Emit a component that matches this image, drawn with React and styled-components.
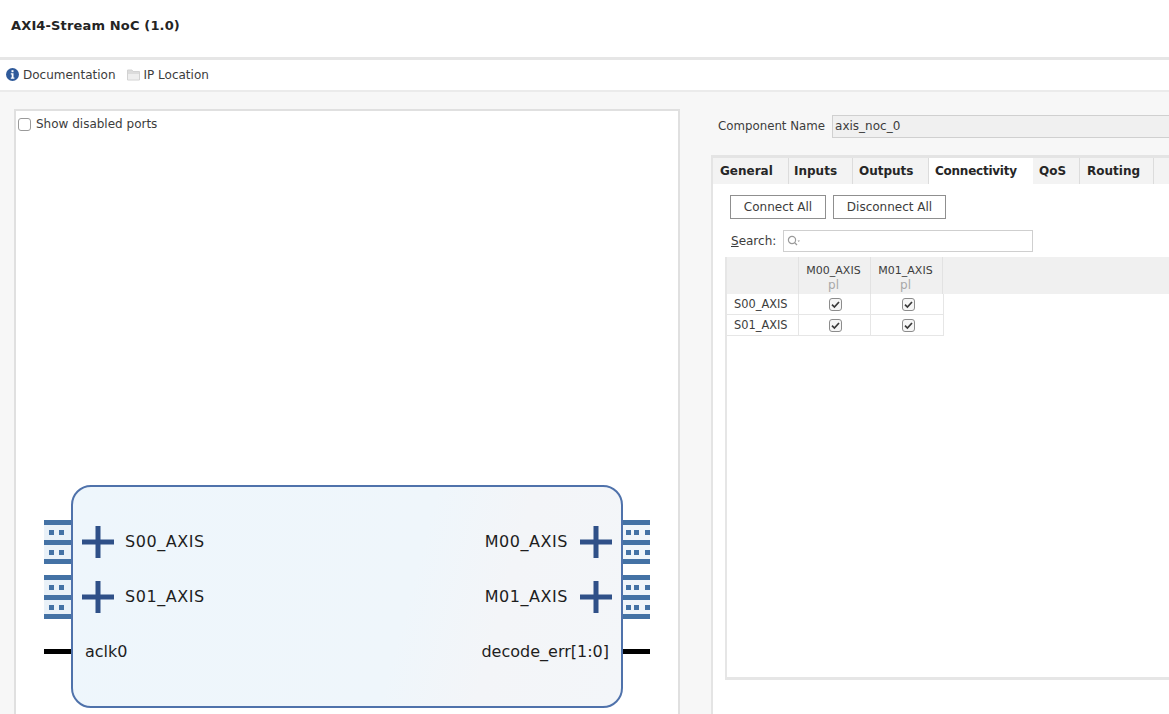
import React from "react";
import styled, { createGlobalStyle } from "styled-components";

const GlobalStyle = createGlobalStyle`
  html, body {
    margin: 0;
    padding: 0;
    background: #ffffff;
  }
  body {
    font-family: "DejaVu Sans", "Liberation Sans", sans-serif;
    color: #2e2e2e;
    font-size: 12px;
  }
`;

const Page = styled.div`
  width: 1169px;
  height: 714px;
  overflow: hidden;
  display: flex;
  flex-direction: column;
`;

const Header = styled.div`
  height: 50px;
  flex-shrink: 0;
  display: flex;
  align-items: center;
  padding: 0 0 7px 11px;
  border-bottom: 3px solid #e6e6e6;
`;

const Title = styled.div`
  font-weight: 700;
  font-size: 13px;
  letter-spacing: 0.15px;
  color: #242424;
`;

const LinkBar = styled.div`
  height: 29px;
  flex-shrink: 0;
  display: flex;
  align-items: center;
  padding: 0 0 1px 6px;
  border-bottom: 2px solid #ebebeb;
`;

const LinkItem = styled.div`
  display: flex;
  align-items: center;
  gap: 4px;
  margin-right: 11px;
  color: #3c3c3c;
`;

const Main = styled.div`
  flex: 1;
  display: flex;
  align-items: flex-start;
  background: #f7f7f7;
  padding: 17px 0 0 14px;
  min-height: 0;
`;

const CanvasPanel = styled.div`
  width: 662px;
  height: 640px;
  flex-shrink: 0;
  background: #ffffff;
  border: 2px solid #e0e0e0;
`;

const ShowPorts = styled.label`
  display: flex;
  align-items: center;
  gap: 5px;
  padding: 6px 0 0 2px;
  color: #3c3c3c;
`;

const EmptyBox = styled.span`
  width: 11px;
  height: 11px;
  border: 1px solid #9a9a9a;
  border-radius: 3px;
  background: #fff;
`;

const Diagram = styled.div`
  margin: 354px 0 0 28px;
  display: flex;
`;

const PortColumn = styled.div`
  width: 27px;
  padding-top: 29px;
  display: flex;
  flex-direction: column;
`;

const PortSlot = styled.div`
  height: 55px;
  display: flex;
  align-items: center;
`;

const WirePort = styled.div`
  width: 100%;
  height: 5px;
  background: #000000;
`;

const Block = styled.div`
  width: 548px;
  height: 192px;
  border: 2px solid #4f72ab;
  border-radius: 20px;
  background: linear-gradient(105deg, #eef6fc 0%, #eff6fb 60%, #f3f5f8 76%, #f3f6f9 100%);
  padding-top: 27px;
`;

const BlockRow = styled.div`
  height: 55px;
  display: flex;
  align-items: center;
  justify-content: space-between;
`;

const PinGroup = styled.div`
  display: flex;
  align-items: center;
  gap: ${({ $right }) => ($right ? "12px" : "11px")};
  padding: ${({ $right }) => ($right ? "0 9px 0 0" : "0 0 0 9px")};
`;

const PinName = styled.span`
  font-size: 16px;
  color: #1e1e1e;
  letter-spacing: ${({ $bus }) => ($bus ? "0.55px" : "0")};
  padding: ${({ $pad }) => $pad || "0"};
`;

const RightPane = styled.div`
  margin-left: 31px;
  width: 458px;
  flex-shrink: 0;
  display: flex;
  flex-direction: column;
`;

const NameRow = styled.div`
  display: flex;
  align-items: center;
  gap: 7px;
  padding-left: 7px;
  margin-top: 6px;
`;

const NameLabel = styled.span`
  font-size: 11.8px;
  padding-bottom: 2px;
  color: #3c3c3c;
`;

const NameField = styled.div`
  flex: 1;
  height: 21px;
  line-height: 21px;
  border: 1px solid #d0d0d0;
  border-right: none;
  background: #f0f0f0;
  padding-left: 2px;
  color: #3c3c3c;
`;

const TabFrame = styled.div`
  margin-top: 17px;
  border-top: 3px solid #e4e4e4;
  border-left: 2px solid #e4e4e4;
  background: #ffffff;
  height: 560px;
`;

const TabStrip = styled.div`
  height: 26px;
  display: flex;
  background: #f3f3f3;
`;

const Tab = styled.div`
  height: 26px;
  box-sizing: border-box;
  width: ${({ $w }) => $w}px;
  padding-left: ${({ $pad }) => $pad}px;
  line-height: 27px;
  font-weight: 700;
  font-size: 12px;
  letter-spacing: ${({ $track }) => $track || 0}px;
  color: #262626;
  background: ${({ $active }) => ($active ? "#ffffff" : "transparent")};
  border-right: ${({ $active }) => ($active ? "none" : "1px solid #dcdcdc")};
`;

const TabBody = styled.div`
  padding: 11px 0 0 12px;
  background: #ffffff;
`;

const ButtonRow = styled.div`
  display: flex;
  gap: 7px;
  padding-left: 5px;
`;

const Button = styled.button`
  width: ${({ $w }) => $w}px;
  height: 24px;
  padding: 0;
  font-family: inherit;
  font-size: 12px;
  color: #3c3c3c;
  background: #ffffff;
  border: 1px solid #8f8f8f;
`;

const SearchRow = styled.div`
  display: flex;
  align-items: center;
  margin-top: 11px;
  padding-left: 6px;
`;

const SearchLabel = styled.span`
  width: 52px;
  color: #3c3c3c;
`;

const SearchBox = styled.div`
  width: 250px;
  height: 22px;
  box-sizing: border-box;
  display: flex;
  align-items: center;
  padding-left: 3px;
  border: 1px solid #cfcfcf;
`;

const TablePanel = styled.div`
  margin-top: 5px;
  height: 420px;
  border-left: 2px solid #e6e6e6;
  border-bottom: 3px solid #e6e6e6;
`;

const HeadRow = styled.div`
  display: flex;
  height: 37px;
  background: #f0f0f0;
`;

const HeadCell = styled.div`
  width: 72px;
  height: 37px;
  box-sizing: border-box;
  border-right: 1px solid #e2e2e2;
  display: flex;
  flex-direction: column;
  align-items: center;
  padding: 7px 2px 0 0;
  font-size: 11px;
  line-height: 14px;
  color: #3c3c3c;
`;

const CornerCell = styled.div`
  width: 71px;
  border-right: 1px solid #e2e2e2;
`;

const SubLabel = styled.span`
  font-size: 12px;
  line-height: 15px;
  color: #a8a8a8;
`;

const BodyRow = styled.div`
  display: flex;
  width: 216px;
  height: 20px;
  border-bottom: 1px solid #e6e6e6;
  border-right: 1px solid #e6e6e6;
  box-sizing: content-box;
`;

const RowLabel = styled.div`
  width: 72px;
  border-right: 1px solid #e6e6e6;
  padding-left: 7px;
  box-sizing: border-box;
  font-size: 11.4px;
  line-height: 20px;
  color: #3c3c3c;
`;

const CheckCell = styled.div`
  width: 72px;
  box-sizing: border-box;
  padding-left: 2px;
  border-right: ${({ $last }) => ($last ? "none" : "1px solid #e6e6e6")};
  display: flex;
  align-items: center;
  justify-content: center;
`;

const CheckBox = () => (
  <svg width="13" height="13" viewBox="0 0 13 13">
    <rect x="0.5" y="0.5" width="12" height="12" rx="2.5" fill="#f6f6f6" stroke="#8c8c8c" />
    <path d="M3 6.6 L5.4 9 L10 4" fill="none" stroke="#3a3a3a" strokeWidth="1.7" />
  </svg>
);

const InfoIcon = () => (
  <svg width="13" height="13" viewBox="0 0 13 13">
    <circle cx="6.5" cy="6.5" r="6.5" fill="#2f5a9a" />
    <rect x="5.5" y="2.2" width="2" height="2" fill="#fff" />
    <path d="M4.8 5.3 H7.5 V9.6 H8.4 V10.7 H4.8 V9.6 H5.7 V6.4 H4.8 Z" fill="#fff" />
  </svg>
);

const FolderIcon = () => (
  <svg width="13" height="12" viewBox="0 0 13 12">
    <path d="M0.5 1 H5 L6 2.5 H12.5 V11 H0.5 Z" fill="#dcdcdc" stroke="#d2d2d2" />
    <rect x="1" y="5" width="11" height="5.5" fill="#eeeeee" />
  </svg>
);

const SearchIcon = () => (
  <svg width="14" height="12" viewBox="0 0 14 12">
    <circle cx="5" cy="5" r="3.6" fill="none" stroke="#9a9a9a" strokeWidth="1.2" />
    <path d="M7.6 7.6 L10 10" stroke="#9a9a9a" strokeWidth="1.3" />
    <path d="M10.5 5.5 H13 L11.75 7 Z" fill="#9a9a9a" />
  </svg>
);

const PlusIcon = () => (
  <svg width="32" height="32" viewBox="0 0 32 32">
    <path d="M0 16 H32 M16 0 V32" stroke="#2f5088" strokeWidth="5" />
  </svg>
);

// bus port stub, the right side has three dots per lane
const BusPort = ({ right }) => {
  const dots = right ? [3, 11, 22] : [5, 15];
  return (
    <svg width="27" height="44" viewBox="0 0 27 44">
      <rect width="27" height="44" fill={right ? "#f0f5fa" : "#e9f1f8"} />
      <rect y="0" width="27" height="5" fill="#4472a5" />
      <rect y="20" width="27" height="5" fill="#4472a5" />
      <rect y="39" width="27" height="5" fill="#4472a5" />
      {dots.map((x) => (
        <React.Fragment key={x}>
          <rect x={x} y="10" width="5" height="5" fill="#4472a5" />
          <rect x={x} y="30" width="5" height="5" fill="#4472a5" />
        </React.Fragment>
      ))}
    </svg>
  );
};

const tabs = [
  { label: "General", w: 76, pad: 7 },
  { label: "Inputs", w: 64, pad: 5 },
  { label: "Outputs", w: 76, pad: 6 },
  { label: "Connectivity", w: 104, pad: 6, track: -0.25, active: true },
  { label: "QoS", w: 47, pad: 6 },
  { label: "Routing", w: 74, pad: 7 },
];

const masters = ["M00_AXIS", "M01_AXIS"];
const slaves = ["S00_AXIS", "S01_AXIS"];

const App = () => (
  <Page>
    <GlobalStyle />
    <Header>
      <Title>AXI4-Stream NoC (1.0)</Title>
    </Header>
    <LinkBar>
      <LinkItem>
        <InfoIcon />
        Documentation
      </LinkItem>
      <LinkItem>
        <FolderIcon />
        IP Location
      </LinkItem>
    </LinkBar>
    <Main>
      <CanvasPanel>
        <ShowPorts>
          <EmptyBox />
          Show disabled ports
        </ShowPorts>
        <Diagram>
          <PortColumn>
            <PortSlot><BusPort /></PortSlot>
            <PortSlot><BusPort /></PortSlot>
            <PortSlot><WirePort /></PortSlot>
          </PortColumn>
          <Block>
            <BlockRow>
              <PinGroup><PlusIcon /><PinName $bus>S00_AXIS</PinName></PinGroup>
              <PinGroup $right><PinName $bus>M00_AXIS</PinName><PlusIcon /></PinGroup>
            </BlockRow>
            <BlockRow>
              <PinGroup><PlusIcon /><PinName $bus>S01_AXIS</PinName></PinGroup>
              <PinGroup $right><PinName $bus>M01_AXIS</PinName><PlusIcon /></PinGroup>
            </BlockRow>
            <BlockRow>
              <PinName $pad="0 0 0 12px">aclk0</PinName>
              <PinName $pad="0 12px 0 0">decode_err[1:0]</PinName>
            </BlockRow>
          </Block>
          <PortColumn>
            <PortSlot><BusPort right /></PortSlot>
            <PortSlot><BusPort right /></PortSlot>
            <PortSlot><WirePort /></PortSlot>
          </PortColumn>
        </Diagram>
      </CanvasPanel>
      <RightPane>
        <NameRow>
          <NameLabel>Component Name</NameLabel>
          <NameField>axis_noc_0</NameField>
        </NameRow>
        <TabFrame>
          <TabStrip>
            {tabs.map((tab) => (
              <Tab key={tab.label} $w={tab.w} $pad={tab.pad} $track={tab.track} $active={tab.active}>
                {tab.label}
              </Tab>
            ))}
          </TabStrip>
          <TabBody>
            <ButtonRow>
              <Button $w={96}>Connect All</Button>
              <Button $w={113}>Disconnect All</Button>
            </ButtonRow>
            <SearchRow>
              <SearchLabel><u>S</u>earch:</SearchLabel>
              <SearchBox><SearchIcon /></SearchBox>
            </SearchRow>
            <TablePanel>
              <HeadRow>
                <CornerCell />
                {masters.map((name) => (
                  <HeadCell key={name}>
                    {name}
                    <SubLabel>pl</SubLabel>
                  </HeadCell>
                ))}
              </HeadRow>
              {slaves.map((name) => (
                <BodyRow key={name}>
                  <RowLabel>{name}</RowLabel>
                  <CheckCell><CheckBox /></CheckCell>
                  <CheckCell $last><CheckBox /></CheckCell>
                </BodyRow>
              ))}
            </TablePanel>
          </TabBody>
        </TabFrame>
      </RightPane>
    </Main>
  </Page>
);

export default App;
